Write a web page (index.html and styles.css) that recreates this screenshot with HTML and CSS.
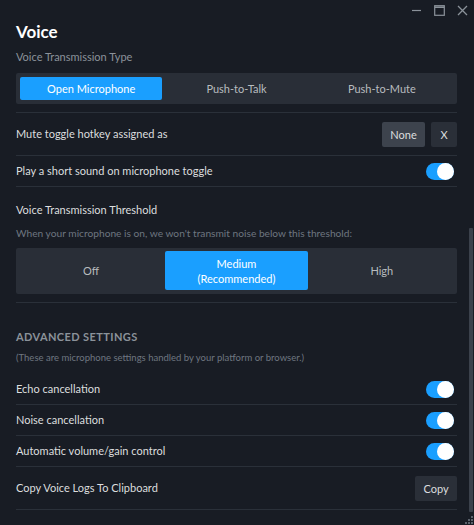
FILE: index.html
```html
<!DOCTYPE html>
<html lang="en">
<head>
<meta charset="utf-8">
<title>Voice</title>
<link rel="stylesheet" href="styles.css">
</head>
<body>
<div class="window">
  <div class="titlebar">
    <span class="wc wc-min"><svg width="11" height="11" viewBox="0 0 11 11"><path d="M1 5.5h9" stroke="currentColor" stroke-width="1.2"/></svg></span>
    <span class="wc wc-max"><svg width="11" height="11" viewBox="0 0 11 11"><rect x="0.7" y="0.7" width="9.6" height="9.6" fill="none" stroke="currentColor" stroke-width="1.2"/><path d="M0.7 2.2h9.6" stroke="currentColor" stroke-width="1.6"/></svg></span>
    <span class="wc wc-close"><svg width="11" height="11" viewBox="0 0 11 11"><path d="M1 1l9 9M10 1l-9 9" stroke="currentColor" stroke-width="1.3"/></svg></span>
  </div>
  <div class="content">
    <h1 class="title">Voice</h1>
    <div class="section section-type">
      <div class="label-muted">Voice Transmission Type</div>
      <div class="segmented seg-type">
        <div class="seg-btn active">Open Microphone</div>
        <div class="seg-btn">Push-to-Talk</div>
        <div class="seg-btn">Push-to-Mute</div>
      </div>
    </div>
    <div class="row row-tall">
      <div class="row-label">Mute toggle hotkey assigned as</div>
      <div class="row-actions">
        <div class="btn btn-none">None</div>
        <div class="btn btn-x">X</div>
      </div>
    </div>
    <div class="row">
      <div class="row-label">Play a short sound on microphone toggle</div>
      <div class="toggle on"><span class="knob"></span></div>
    </div>
    <div class="section section-threshold">
      <div class="label">Voice Transmission Threshold</div>
      <div class="desc">When your microphone is on, we won't transmit noise below this threshold:</div>
      <div class="segmented seg-threshold">
        <div class="seg-btn">Off</div>
        <div class="seg-btn active">Medium<br>(Recommended)</div>
        <div class="seg-btn">High</div>
      </div>
    </div>
    <div class="advanced">
      <div class="adv-title">ADVANCED SETTINGS</div>
      <div class="adv-note">(These are microphone settings handled by your platform or browser.)</div>
    </div>
    <div class="row">
      <div class="row-label">Echo cancellation</div>
      <div class="toggle on"><span class="knob"></span></div>
    </div>
    <div class="row">
      <div class="row-label">Noise cancellation</div>
      <div class="toggle on"><span class="knob"></span></div>
    </div>
    <div class="row">
      <div class="row-label">Automatic volume/gain control</div>
      <div class="toggle on"><span class="knob"></span></div>
    </div>
    <div class="row row-tall">
      <div class="row-label">Copy Voice Logs To Clipboard</div>
      <div class="btn btn-copy">Copy</div>
    </div>
  </div>
  <div class="scrollbar"></div>
  <div class="grip">
    <span></span><span></span><span></span><span></span><span></span><span></span>
  </div>
</div>
</body>
</html>
```

FILE: styles.css
```css
html, body {
  margin: 0;
  padding: 0;
  background: #181c24;
}
body {
  font-family: Lato, "Noto Sans", sans-serif;
  color: #dcdedf;
  font-size: 11px;
}
.window {
  position: relative;
  width: 474px;
  height: 525px;
  overflow: hidden;
  background: #181c24;
}
.titlebar {
  height: 20px;
  display: flex;
  justify-content: flex-end;
  align-items: center;
  gap: 12px;
  padding-right: 6px;
  color: #8b929a;
}
.wc { display: flex; width: 11px; height: 11px; }
.wc-min { margin-top: 1px; }
.content {
  padding: 0 17px 0 16px;
}
.title {
  margin: 0;
  font-size: 17px;
  font-weight: 700;
  line-height: 24px;
  color: #ffffff;
}
.label-muted {
  margin-top: 5px;
  line-height: 16px;
  color: #8b929a;
  font-size: 11px;
}
.section-type {
  padding-bottom: 8px;
  border-bottom: 1px solid #2a3039;
}
.segmented {
  display: grid;
  grid-template-columns: 1fr 1fr 1fr;
  gap: 3px;
  background: #292e37;
  border-radius: 2px;
  margin-top: 8px;
}
.seg-type {
  padding: 4px;
  height: 23px;
}
.seg-threshold {
  padding: 3px 4px 4px;
  height: 39px;
}
.seg-btn {
  display: flex;
  align-items: center;
  justify-content: center;
  text-align: center;
  color: #b8bcbf;
  border-radius: 2px;
  line-height: 15px;
}
.seg-btn.active {
  background: #1a9fff;
  color: #ffffff;
}
.row {
  height: 30px;
  display: flex;
  align-items: center;
  justify-content: space-between;
  border-bottom: 1px solid #2a3039;
}
.row-tall {
  height: 42px;
}
.row-label {
  color: #dcdedf;
  padding-bottom: 2px;
}
.row-actions {
  display: flex;
  gap: 6px;
}
.btn {
  height: 25px;
  display: flex;
  align-items: center;
  justify-content: center;
  border-radius: 2px;
  color: #dcdedf;
}
.btn-none {
  width: 43px;
  background: #3d434d;
}
.btn-x {
  width: 26px;
  background: #2a2f38;
}
.btn-copy {
  width: 42px;
  background: #2a2f38;
}
.toggle {
  width: 28px;
  height: 17px;
  border-radius: 9px;
  background: #1a9fff;
  margin-right: 3px;
  display: flex;
  justify-content: flex-end;
}
.toggle .knob {
  width: 17px;
  height: 17px;
  border-radius: 50%;
  background: #ffffff;
}
.section-threshold {
  padding-top: 15px;
  padding-bottom: 8px;
  border-bottom: 1px solid #2a3039;
}
.label {
  line-height: 16px;
  color: #dcdedf;
}
.desc {
  margin-top: 8px;
  line-height: 14px;
  font-size: 10.2px;
  color: #6e7680;
}
.advanced {
  padding-top: 26px;
  padding-bottom: 9px;
}
.adv-title {
  line-height: 16px;
  font-size: 11px;
  font-weight: 700;
  letter-spacing: 0.4px;
  color: #8b929a;
}
.adv-note {
  margin-top: 6px;
  line-height: 14px;
  font-size: 9.5px;
  color: #6e7680;
}
.scrollbar {
  position: absolute;
  right: 1px;
  top: 228px;
  width: 4px;
  height: 284px;
  background: #3b414b;
  border-radius: 1px;
}
.grip {
  position: absolute;
  right: 1px;
  bottom: 1px;
  width: 8px;
  height: 8px;
}
.grip span {
  position: absolute;
  width: 2px;
  height: 2px;
  background: #5a616b;
}
.grip span:nth-child(1) { right: 0; bottom: 0; }
.grip span:nth-child(2) { right: 3px; bottom: 0; }
.grip span:nth-child(3) { right: 6px; bottom: 0; }
.grip span:nth-child(4) { right: 0; bottom: 3px; }
.grip span:nth-child(5) { right: 3px; bottom: 3px; }
.grip span:nth-child(6) { right: 0; bottom: 6px; }
```
